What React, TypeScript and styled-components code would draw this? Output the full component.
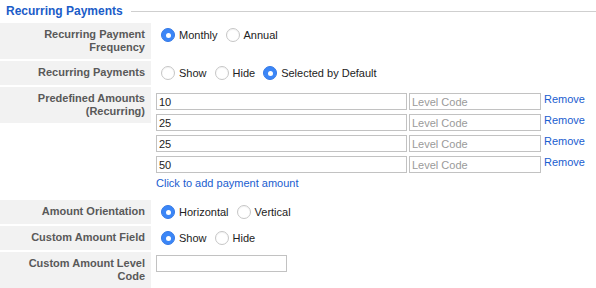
import React from "react";
import styled, { createGlobalStyle } from "styled-components";

const Global = createGlobalStyle`
  html, body { margin: 0; padding: 0; background: #fff; }
  body { font-family: "Liberation Sans", Arial, Helvetica, sans-serif; font-size: 11px; color: #222; }
`;

const Page = styled.div`
  width: 596px;
  height: 288px;
  overflow: hidden;
`;

const SectionHeader = styled.div`
  display: flex;
  align-items: center;
  height: 22px;
  padding-left: 6px;
  margin-bottom: 1px;
`;

const SectionTitle = styled.h2`
  margin: 0;
  font-size: 12px;
  font-weight: bold;
  color: #1b5cc8;
  line-height: 14px;
  white-space: nowrap;
`;

const Rule = styled.div`
  flex: 1;
  height: 1px;
  background: #cfcfcf;
  margin-left: 8px;
`;

const Form = styled.div`
  display: grid;
  grid-template-columns: 151px 1fr;
  column-gap: 5px;
  row-gap: 2px;
`;

const Label = styled.div`
  align-self: start;
  background: #f2f2f2;
  color: #595959;
  font-weight: bold;
  font-size: 11px;
  line-height: 13px;
  text-align: right;
  padding: 5px 6px 5px 6px;
  min-height: 14px;
`;

const Value = styled.div<{ $pt?: number; $pb?: number }>`
  padding-top: ${(p) => p.$pt ?? 5}px;
  padding-bottom: ${(p) => p.$pb ?? 5}px;
  display: flex;
  flex-direction: column;
`;

const Options = styled.div`
  display: flex;
  align-items: center;
  height: 14px;
`;

const Option = styled.label`
  display: inline-flex;
  align-items: center;
  margin-right: 3px;
  color: #222;
  line-height: 14px;
`;

const Radio = styled.span<{ $checked?: boolean }>`
  box-sizing: border-box;
  width: 14px;
  height: 14px;
  border-radius: 50%;
  margin: 0 4px 0 5px;
  display: inline-flex;
  align-items: center;
  justify-content: center;
  background: ${(p) => (p.$checked ? "#3b86f7" : "#fff")};
  border: 1px solid ${(p) => (p.$checked ? "#3479e6" : "#c6c6c6")};
  box-shadow: ${(p) => (p.$checked ? "none" : "inset 0 1px 1px rgba(0,0,0,0.05)")};
  &::after {
    content: "";
    display: ${(p) => (p.$checked ? "block" : "none")};
    width: 5px;
    height: 5px;
    border-radius: 50%;
    background: #fff;
  }
`;

const AmountList = styled.div`
  display: flex;
  flex-direction: column;
  gap: 4px;
`;

const AmountRow = styled.div`
  display: flex;
  align-items: flex-start;
`;

const TextInput = styled.input<{ $w: number }>`
  box-sizing: border-box;
  width: ${(p) => p.$w}px;
  height: 17px;
  border: 1px solid #c2c2c2;
  border-radius: 0;
  padding: 0 2px;
  margin: 0;
  font-family: "Liberation Sans", Arial, sans-serif;
  font-size: 11px;
  color: #222;
  background: #fff;
  outline: none;
  &::placeholder { color: #9a9a9a; }
  & + & { margin-left: 2px; }
`;

const Link = styled.a`
  color: #1a5dcf;
  text-decoration: none;
  font-size: 11px;
  line-height: 13px;
  cursor: pointer;
`;

const RemoveLink = styled(Link)`
  margin-left: 3px;
  line-height: 12px;
`;

const AddLink = styled(Link)`
  margin-top: 3px;
  line-height: 14px;
`;

type Opt = { label: string; checked?: boolean };

const RadioGroup = ({ options }: { options: Opt[] }) => (
  <Options>
    {options.map((o) => (
      <Option key={o.label}>
        <Radio $checked={o.checked} />
        {o.label}
      </Option>
    ))}
  </Options>
);

const amounts = ["10", "25", "25", "50"];

export default function App() {
  return (
    <Page>
      <Global />
      <SectionHeader>
        <SectionTitle>Recurring Payments</SectionTitle>
        <Rule />
      </SectionHeader>
      <Form>
        <Label>Recurring Payment Frequency</Label>
        <Value>
          <RadioGroup options={[{ label: "Monthly", checked: true }, { label: "Annual" }]} />
        </Value>

        <Label>Recurring Payments</Label>
        <Value>
          <RadioGroup
            options={[{ label: "Show" }, { label: "Hide" }, { label: "Selected by Default", checked: true }]}
          />
        </Value>

        <Label>Predefined Amounts (Recurring)</Label>
        <Value $pt={6} $pb={8}>
          <AmountList>
            {amounts.map((a, i) => (
              <AmountRow key={i}>
                <TextInput $w={251} defaultValue={a} />
                <TextInput $w={132} placeholder="Level Code" />
                <RemoveLink>Remove</RemoveLink>
              </AmountRow>
            ))}
          </AmountList>
          <AddLink>Click to add payment amount</AddLink>
        </Value>

        <Label>Amount Orientation</Label>
        <Value>
          <RadioGroup options={[{ label: "Horizontal", checked: true }, { label: "Vertical" }]} />
        </Value>

        <Label>Custom Amount Field</Label>
        <Value>
          <RadioGroup options={[{ label: "Show", checked: true }, { label: "Hide" }]} />
        </Value>

        <Label>Custom Amount Level Code</Label>
        <Value $pt={3}>
          <TextInput $w={131} />
        </Value>
      </Form>
    </Page>
  );
}
